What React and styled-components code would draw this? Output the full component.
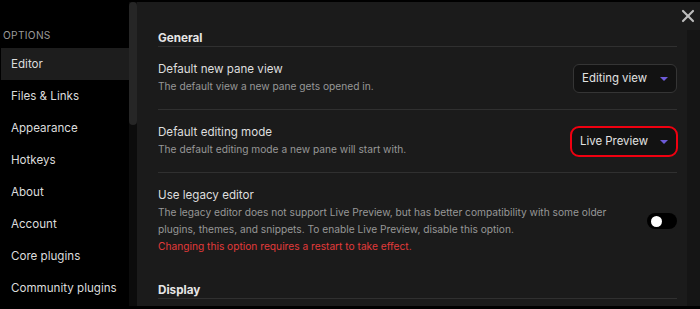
import React from "react";
import styled, { createGlobalStyle } from "styled-components";
import { X } from "lucide-react";

const GlobalStyle = createGlobalStyle`
  html, body {
    margin: 0;
    padding: 0;
    background: #000;
  }
  body {
    font-family: Inter, "Noto Sans", sans-serif;
    -webkit-font-smoothing: antialiased;
  }
`;

const navItems = [
  "Editor",
  "Files & Links",
  "Appearance",
  "Hotkeys",
  "About",
  "Account",
  "Core plugins",
  "Community plugins",
];

const App = () => {
  return (
    <>
      <GlobalStyle />
      <Window>
        <Sidebar>
          <NavList>
            <NavGroupTitle>Options</NavGroupTitle>
            {navItems.map((item, i) => (
              <NavItem key={item} active={i === 0}>
                {item}
              </NavItem>
            ))}
          </NavList>
          <ScrollTrack>
            <ScrollThumb />
          </ScrollTrack>
        </Sidebar>

        <Main>
          <CloseButton>
            <X size={20} strokeWidth={2.6} />
          </CloseButton>
          <Content>
            <SectionHeading>General</SectionHeading>

            <SettingItem>
              <SettingInfo>
                <SettingName>Default new pane view</SettingName>
                <SettingDesc>The default view a new pane gets opened in.</SettingDesc>
              </SettingInfo>
              <Dropdown>
                Editing view
                <Caret />
              </Dropdown>
            </SettingItem>

            <SettingItem>
              <SettingInfo>
                <SettingName>Default editing mode</SettingName>
                <SettingDesc>The default editing mode a new pane will start with.</SettingDesc>
              </SettingInfo>
              <Dropdown highlighted>
                Live Preview
                <Caret />
              </Dropdown>
            </SettingItem>

            <SettingItem last>
              <SettingInfo>
                <SettingName>Use legacy editor</SettingName>
                <SettingDesc>
                  The legacy editor does not support Live Preview, but has better compatibility with some older
                  <br />
                  plugins, themes, and snippets. To enable Live Preview, disable this option.
                </SettingDesc>
                <SettingWarning>Changing this option requires a restart to take effect.</SettingWarning>
              </SettingInfo>
              <Toggle>
                <Knob />
              </Toggle>
            </SettingItem>

            <SectionHeading spaced>Display</SectionHeading>
          </Content>
          <ContentScrollGutter />
        </Main>
      </Window>
    </>
  );
};

const Window = styled.div`
  display: flex;
  width: 700px;
  height: 309px;
  padding-top: 2px;
  padding-bottom: 3px;
  box-sizing: border-box;
  background: #000;
  overflow: hidden;
`;

const Sidebar = styled.aside`
  display: flex;
  width: 137px;
  flex-shrink: 0;
  background: #000;
`;

const NavList = styled.nav`
  width: 129px;
  padding-top: 25px;
  display: flex;
  flex-direction: column;
`;

const NavGroupTitle = styled.div`
  padding-left: 3px;
  font-size: 10.2px;
  line-height: 16px;
  letter-spacing: 0.3px;
  text-transform: uppercase;
  color: #9a9a9a;
  margin-bottom: 5px;
`;

const NavItem = styled.div`
  height: 32px;
  display: flex;
  align-items: center;
  padding-left: 10px;
  margin-left: 1px;
  font-size: 11.6px;
  color: #dcdcdc;
  background: ${(props) => (props.active ? "#1d1d1d" : "transparent")};
  white-space: nowrap;
`;

const ScrollTrack = styled.div`
  width: 8px;
  background: #0c0c0c;
`;

const ScrollThumb = styled.div`
  height: 123px;
  border-radius: 4px;
  background: #262626;
`;

const Main = styled.main`
  position: relative;
  flex: 1;
  min-width: 0;
  display: flex;
  background: #1b1b1b;
`;

const CloseButton = styled.div`
  position: absolute;
  top: 4px;
  right: 2px;
  display: flex;
  color: #bdbdbd;
`;

const Content = styled.div`
  flex: 1;
  min-width: 0;
  padding: 28px 10px 0 21px;
`;

const ContentScrollGutter = styled.div`
  width: 13px;
  margin-top: 28px;
  background: #151515;
`;

const SectionHeading = styled.div`
  font-size: 11.7px;
  font-weight: 700;
  line-height: 16px;
  color: #e6e6e6;
  border-bottom: 1px solid #303030;
  margin-top: ${(props) => (props.spaced ? "13px" : "0")};
`;

const SettingItem = styled.div`
  display: flex;
  align-items: center;
  padding: 14px 0;
  border-bottom: ${(props) => (props.last ? "none" : "1px solid #303030")};
`;

const SettingInfo = styled.div`
  flex: 1;
  min-width: 0;
  margin-right: 16px;
`;

const SettingName = styled.div`
  font-size: 11.6px;
  line-height: 17px;
  color: #dedede;
`;

const SettingDesc = styled.div`
  font-size: 10.2px;
  line-height: 17px;
  color: #979797;
  white-space: nowrap;
`;

const SettingWarning = styled(SettingDesc)`
  color: #e23a3a;
`;

const Dropdown = styled.div`
  display: flex;
  align-items: center;
  gap: ${(props) => (props.highlighted ? "12px" : "13px")};
  box-sizing: border-box;
  padding: 0 ${(props) => (props.highlighted ? "8px" : "8px")};
  font-size: 11.4px;
  color: #e2e2e2;
  background: #121212;
  border: ${(props) =>
    props.highlighted ? "2.5px solid #f00010" : "1px solid #353535"};
  border-radius: ${(props) => (props.highlighted ? "9px" : "6px")};
  margin-right: ${(props) => (props.highlighted ? "-1px" : "0")};
  height: ${(props) => (props.highlighted ? "31px" : "29px")};
  white-space: nowrap;
`;

const Caret = styled.span`
  width: 0;
  height: 0;
  border-left: 4px solid transparent;
  border-right: 4px solid transparent;
  border-top: 4px solid #6d5bd8;
  margin-top: 1px;
`;

const Toggle = styled.div`
  width: 30px;
  height: 16px;
  flex-shrink: 0;
  border-radius: 8px;
  background: #000;
  display: flex;
  align-items: center;
  padding-left: 4px;
  box-sizing: border-box;
`;

const Knob = styled.div`
  width: 11px;
  height: 11px;
  border-radius: 50%;
  background: #fff;
`;

export default App;
